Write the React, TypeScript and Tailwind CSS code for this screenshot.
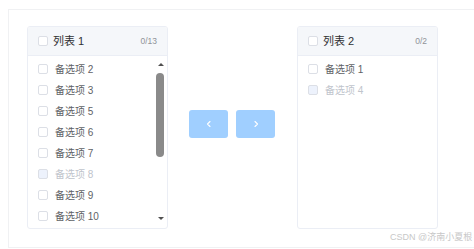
import React from 'react';

type Item = { label: string; disabled?: boolean };

const leftItems: Item[] = [
  { label: '备选项 2' },
  { label: '备选项 3' },
  { label: '备选项 5' },
  { label: '备选项 6' },
  { label: '备选项 7' },
  { label: '备选项 8', disabled: true },
  { label: '备选项 9' },
  { label: '备选项 10' },
];

const rightItems: Item[] = [{ label: '备选项 1' }, { label: '备选项 4', disabled: true }];

function Box({ disabled }: { disabled?: boolean }) {
  return (
    <span
      className={
        'block w-[10px] h-[10px] rounded-[2px] border shrink-0 ' +
        (disabled ? 'bg-[#edf2fc] border-[#dcdfe6]' : 'bg-white border-[#dcdfe6]')
      }
    />
  );
}

function Panel({ title, count, items, scroll }: { title: string; count: string; items: Item[]; scroll?: boolean }) {
  return (
    <div className="w-[141px] h-[203px] border border-[#ebeef5] rounded-[3px] overflow-hidden bg-white shrink-0">
      {/* header */}
      <div className="h-[29px] bg-[#f5f7fa] border-b border-[#ebeef5] flex items-center pl-[10px] pr-[10px]">
        <Box />
        <span className="ml-[5px] text-[11px] text-[#303133]">{title}</span>
        <span className="ml-auto text-[8.5px] text-[#909399]">{count}</span>
      </div>
      {/* body */}
      <div className="relative h-[172px] pt-[2.5px]">
        {items.map((it) => (
          <div key={it.label} className="h-[21px] flex items-center pl-[10px]">
            <Box disabled={it.disabled} />
            <span className={'ml-[7px] text-[10px] ' + (it.disabled ? 'text-[#c0c4cc]' : 'text-[#606266]')}>
              {it.label}
            </span>
          </div>
        ))}
        {scroll && (
          <div className="absolute right-[2px] top-0 w-[10px] h-full">
            <div className="absolute left-[3px] top-[7px] w-0 h-0 border-l-[3px] border-r-[3px] border-b-[3px] border-l-transparent border-r-transparent border-b-[#505050]" />
            <div className="absolute left-[1px] top-[17px] w-[8px] h-[84px] rounded-[4px] bg-[#8a8a8a]" />
            <div className="absolute left-[3px] top-[161px] w-0 h-0 border-l-[3px] border-r-[3px] border-t-[3px] border-l-transparent border-r-transparent border-t-[#505050]" />
          </div>
        )}
      </div>
    </div>
  );
}

function Arrow({ dir }: { dir: 'left' | 'right' }) {
  return (
    <button className="w-[39px] h-[28px] rounded-[3px] bg-[#a0cfff] flex items-center justify-center">
      <svg width="8" height="8" viewBox="0 0 8 8" fill="none">
        <path
          d={dir === 'left' ? 'M5 1.5 L2.5 4 L5 6.5' : 'M3 1.5 L5.5 4 L3 6.5'}
          stroke="white"
          strokeWidth="1.1"
          strokeLinecap="round"
          strokeLinejoin="round"
        />
      </svg>
    </button>
  );
}

export default function App() {
  return (
    <div
      className="w-[474px] h-[249px] overflow-hidden bg-white relative"
      style={{ fontFamily: '"Liberation Sans", "Noto Sans CJK SC", sans-serif' }}
    >
      <div className="ml-[8px] mt-[9px] w-[500px] h-[239px] border border-[#f0f1f3] pl-[18px] pt-[16px] flex items-start">
        <Panel title="列表 1" count="0/13" items={leftItems} scroll />
        <div className="mt-[84px] ml-[21px] mr-[22px] flex gap-[8px]">
          <Arrow dir="left" />
          <Arrow dir="right" />
        </div>
        <Panel title="列表 2" count="0/2" items={rightItems} />
      </div>
      <span className="absolute left-[390px] top-[231px] text-[9px] text-[#c8c8c8]">CSDN @济南小夏根</span>
    </div>
  );
}
